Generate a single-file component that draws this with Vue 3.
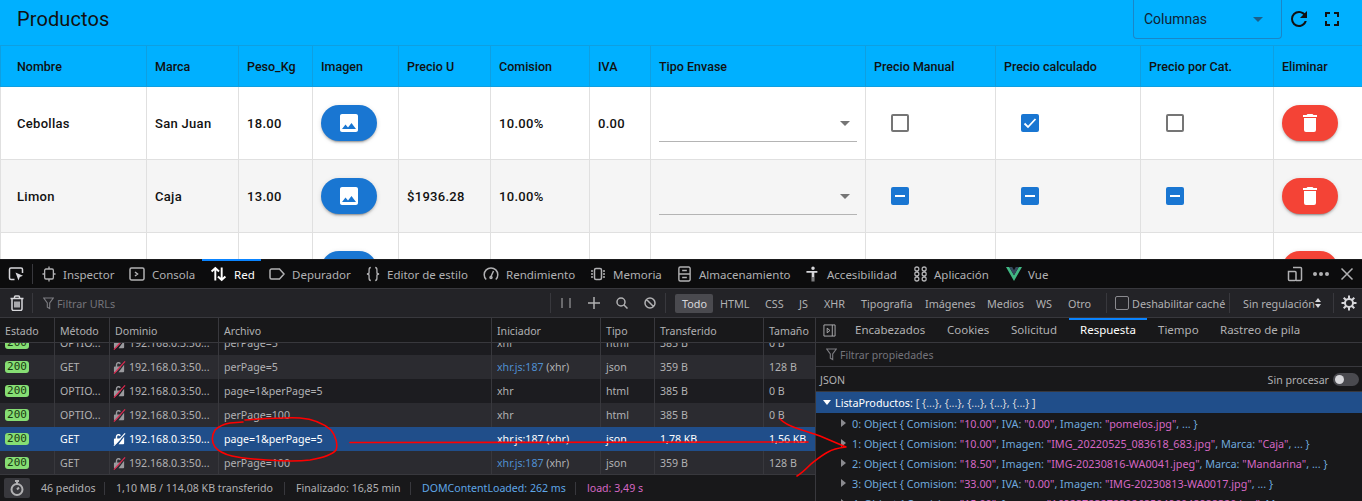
<script setup>
const img = 'M21 19V5c0-1.1-.9-2-2-2H5c-1.1 0-2 .9-2 2v14c0 1.1.9 2 2 2h14c1.1 0 2-.9 2-2zM8.5 13.5l2.5 3.01L14.5 12l4.5 6H5l3.5-4.5z'
const del = 'M19,4H15.5L14.5,3H9.5L8.5,4H5V6H19M6,19A2,2 0 0,0 8,21H16A2,2 0 0,0 18,19V7H6V19Z'
const heads = ['Nombre','Marca','Peso_Kg','Imagen','Precio U','Comision','IVA','Tipo Envase','Precio Manual','Precio calculado','Precio por Cat.','Eliminar']
const rows = [
  { n:'Cebollas', m:'San Juan', p:'18.00', u:'', c:'10.00%', i:'0.00', b:['off','on','off'] },
  { n:'Limon', m:'Caja', p:'13.00', u:'$1936.28', c:'10.00%', i:'', b:['mix','mix','mix'] },
  { n:'', m:'', p:'', u:'', c:'', i:'', b:['','',''] }
]
const tabs = [
  { t:'Inspector', w:87, iw:14, d:'M4.5 3h7a1.5 1.5 0 0 1 1.5 1.5v7a1.5 1.5 0 0 1-1.5 1.5h-7A1.5 1.5 0 0 1 3 11.5v-7A1.5 1.5 0 0 1 4.5 3zM8 .5V3M8 13v2.500M.5 8H3M13 8h2.500' },
  { t:'Consola', w:81, iw:16, d:'M2.500 2h11A1.500 1.500 0 0 1 15 3.500v9a1.500 1.500 0 0 1-1.500 1.500h-11A1.500 1.500 0 0 1 1 12.500v-9A1.500 1.500 0 0 1 2.500 2zM6 6l2.500 2L6 10' },
  { t:'Red', w:59, iw:17, on:true, d:'M5 14.500V2M1.500 5.500L5 2l3.500 3.500M11 1.500V14M7.500 10.500L11 14l3.500-3.500' },
  { t:'Depurador', w:97, iw:16, d:'M2.500 3h8l4.500 5-4.500 5h-8A1.500 1.500 0 0 1 1 11.500v-7A1.500 1.500 0 0 1 2.500 3z' },
  { t:'Editor de estilo', w:117, iw:14, d:'M5.500 1.500C3.500 1.500 3.500 2.500 3.500 4v2.500C3.500 7.500 2.500 8 1 8c1.500 0 2.500.5 2.500 1.500V12c0 1.500 0 2.500 2 2.500M10.500 1.500c2 0 2 1 2 2.500v2.500c0 1 1 1.500 2.500 1.500-1.500 0-2.500.5-2.500 1.500V12c0 1.500 0 2.500-2 2.500' },
  { t:'Rendimiento', w:107, iw:16, d:'M3.200 13.500a6.800 6.800 0 1 1 9.600 0M10.500 5L8 10.500M7 11.500a1 1 0 1 0 2 0 1 1 0 1 0-2 0' },
  { t:'Memoria', w:87, iw:16, d:'M6 2.500h4A1.500 1.500 0 0 1 11.500 4v8a1.500 1.500 0 0 1-1.500 1.500H6A1.500 1.500 0 0 1 4.500 12V4A1.500 1.500 0 0 1 6 2.500zM1 5h2M1 8h2M1 11h2M13 5h2M13 8h2M13 11h2' },
  { t:'Almacenamiento', w:129, iw:15, d:'M3.500 1h9A1.500 1.500 0 0 1 14 2.500v11a1.500 1.500 0 0 1-1.500 1.500h-9A1.500 1.500 0 0 1 2 13.500v-11A1.500 1.500 0 0 1 3.500 1zM2 8h12M5.500 4.500h5M5.500 11.500h5' },
  { t:'Accesibilidad', w:108, iw:14, fill:true, d:'M8 .5a2 1.800 0 1 1 0 3.600 2 1.800 0 0 1 0-3.600zM.5 5h12.500v1.800H9.500V15.500H8.500V11H7.500v4.500H6.500V6.800H.5z' },
  { t:'Aplicación', w:92, iw:13, d:'M1 3a2.500 2 0 1 0 5 0 2.500 2 0 1 0-5 0M10 3a2.500 2 0 1 0 5 0 2.500 2 0 1 0-5 0M1 8a2.500 2 0 1 0 5 0 2.500 2 0 1 0-5 0M10 8a2.500 2 0 1 0 5 0 2.500 2 0 1 0-5 0M1 13a2.500 2 0 1 0 5 0 2.500 2 0 1 0-5 0M10 13a2.500 2 0 1 0 5 0 2.500 2 0 1 0-5 0' },
]
const filters = [['Todo',38],['HTML',45],['CSS',34],['JS',25],['XHR',37],['Tipografía',64],['Imágenes',62],['Medios',49],['WS',32],['Otro',38]]
const cols = ['Estado','Método','Dominio','Archivo','Iniciador','Tipo','Transferido','Tamaño']
const net = [
  { m:'OPTIO...', f:'perPage=5', i:'xhr', t:'html', s:'385 B', z:'0 B' },
  { m:'GET', f:'perPage=5', i:'xhr.js:187', x:true, t:'json', s:'359 B', z:'128 B' },
  { m:'OPTIO...', f:'page=1&perPage=5', i:'xhr', t:'html', s:'385 B', z:'0 B' },
  { m:'OPTIO...', f:'perPage=100', i:'xhr', t:'html', s:'385 B', z:'0 B' },
  { m:'GET', f:'page=1&perPage=5', i:'xhr.js:187', x:true, t:'json', s:'1,78 KB', z:'1,56 KB', sel:true },
  { m:'GET', f:'perPage=100', i:'xhr.js:187', x:true, t:'json', s:'359 B', z:'128 B' },
]
const detail = [['Encabezados',92],['Cookies',64],['Solicitud',69],['Respuesta',78,true],['Tiempo',62],['Rastreo de pila',130]]
const tree = [
  ['0: ','Comision: ','"10.00"',', IVA: ','"0.00"',', Imagen: ','"pomelos.jpg"',', ... }'],
  ['1: ','Comision: ','"10.00"',', Imagen: ','"IMG_20220525_083618_683.jpg"',', Marca: ','"Caja"',', ... }'],
  ['2: ','Comision: ','"18.50"',', Imagen: ','"IMG-20230816-WA0041.jpeg"',', Marca: ','"Mandarina"',', ... }'],
  ['3: ','Comision: ','"33.00"',', IVA: ','"0.00"',', Imagen: ','"IMG-20230813-WA0017.jpg"',', ... }'],
  ['4: ','Comision: ','"15.00"',', Imagen: ','"169237232723026850496048988320.jpg"',', M','',''],
]
</script>

<template>
  <div class="page">
    <section class="app">
      <header class="bar">
        <h1>Productos</h1>
        <div class="columnas"><span>Columnas</span><i class="caret"></i></div>
        <svg class="tool first" viewBox="0 0 24 24"><path d="M17.65,6.35C16.2,4.9 14.21,4 12,4A8,8 0 0,0 4,12A8,8 0 0,0 12,20C15.73,20 18.84,17.45 19.73,14H17.65C16.83,16.33 14.61,18 12,18A6,6 0 0,1 6,12A6,6 0 0,1 12,6C13.66,6 15.14,6.69 16.22,7.78L13,11H20V4L17.65,6.35Z"/></svg>
        <svg class="tool" viewBox="0 0 24 24"><path d="M5,5H10V7H7V10H5V5M14,5H19V10H17V7H14V5M17,14H19V19H14V17H17V14M10,17V19H5V14H7V17H10Z"/></svg>
      </header>
      <div class="grid">
        <div v-for="h in heads" :key="h" class="th">{{ h }}</div>
        <template v-for="(r, ri) in rows" :key="ri">
          <div class="td" :class="{ alt: ri === 1 }">{{ r.n }}</div>
          <div class="td" :class="{ alt: ri === 1 }">{{ r.m }}</div>
          <div class="td" :class="{ alt: ri === 1 }">{{ r.p }}</div>
          <div class="td" :class="{ alt: ri === 1 }"><button class="fab blue"><svg viewBox="0 0 24 24"><path :d="img"/></svg></button></div>
          <div class="td" :class="{ alt: ri === 1 }">{{ r.u }}</div>
          <div class="td" :class="{ alt: ri === 1 }">{{ r.c }}</div>
          <div class="td" :class="{ alt: ri === 1 }">{{ r.i }}</div>
          <div class="td" :class="{ alt: ri === 1 }"><div v-if="ri < 2" class="tsel"><i class="caret gray"></i></div></div>
          <div v-for="(b, bi) in r.b" :key="bi" class="td chk" :class="{ alt: ri === 1 }">
            <span v-if="b" class="box" :class="b">
              <svg v-if="b === 'on'" viewBox="0 0 18 18"><path d="M3.500 9.500l3.500 3.500 7.500-8" fill="none" stroke="#fff" stroke-width="1.800"/></svg>
              <b v-if="b === 'mix'"></b>
            </span>
          </div>
          <div class="td" :class="{ alt: ri === 1 }"><button class="fab red"><svg viewBox="0 0 24 24"><path :d="del"/></svg></button></div>
        </template>
      </div>
    </section>

    <section class="dev">
      <div class="tabs">
        <svg class="ic pick" viewBox="0 0 16 16"><path class="st" d="M6.500 13.500H3A1.500 1.500 0 0 1 1.500 12V3.500A1.500 1.500 0 0 1 3 2h10a1.500 1.500 0 0 1 1.500 1.500V7"/><path class="fl" d="M7.500 6.500l7.500 3.200-3.200 1.300-1.300 3.500z"/></svg>
        <span class="vsep pk"></span>
        <div v-for="t in tabs" :key="t.t" class="tab" :class="{ on: t.on }" :style="{ width: t.w + 'px' }">
          <svg class="ic" viewBox="0 0 16 16" preserveAspectRatio="none" :style="{ width: t.iw + 'px' }"><path :class="t.fill ? 'fl' : 'st'" :d="t.d"/></svg>
          <span>{{ t.t }}</span>
        </div>
        <div class="tab vue">
          <svg class="ic" viewBox="0 0 16 14"><path fill="#41b883" d="M0 0h3.200L8 8.200 12.800 0H16L8 14z"/><path fill="#35495e" d="M3.200 0h3L8 3.200 9.800 0h3L8 8.200z"/></svg>
          <span>Vue</span>
        </div>
        <div class="end">
          <svg class="ic" viewBox="0 0 16 16"><path class="st" d="M6 1.500h7.500a1 1 0 0 1 1 1v11a1 1 0 0 1-1 1H9M1.500 5.500H8a1 1 0 0 1 1 1v7a1 1 0 0 1-1 1H2.500a1 1 0 0 1-1-1v-8z"/></svg>
          <span class="dots"><i></i><i></i><i></i></span>
          <svg class="ic" viewBox="0 0 16 16"><path class="st" d="M2.500 2.500l11 11M13.500 2.500l-11 11"/></svg>
        </div>
      </div>

      <div class="toolbar">
        <svg class="ic trash" viewBox="0 0 14 16"><path class="st br" d="M.5 3.500h13M4.500 3.500V2a1 1 0 0 1 1-1h3a1 1 0 0 1 1 1v1.500M2 3.500V14a1.500 1.500 0 0 0 1.500 1.500h7A1.500 1.500 0 0 0 12 14V3.500M5 6.500v6M7 6.500v6M9 6.500v6"/></svg>
        <span class="vsep s1"></span>
        <svg class="ic funnel" viewBox="0 0 12 14"><path class="dim" d="M.8 1h10.400L7.300 6.500v6L4.700 11V6.500z"/></svg>
        <span class="ph">Filtrar URLs</span>
        <span class="vsep s2"></span>
        <svg class="ic pause" viewBox="0 0 10 12"><path class="st thin" d="M1 1v10M9 1v10"/></svg>
        <svg class="ic plus" viewBox="0 0 12 12"><path class="st" d="M6 0v12M0 6h12"/></svg>
        <svg class="ic mag" viewBox="0 0 12 12"><path class="st" d="M1 5a4 4 0 1 0 8 0 4 4 0 1 0-8 0M8 8l3.500 3.500"/></svg>
        <svg class="ic blk" viewBox="0 0 12 12"><path class="st" d="M1 6a5 5 0 1 0 10 0A5 5 0 1 0 1 6M2.500 2.500l7 7"/></svg>
        <span class="vsep s3"></span>
        <span v-for="(f, i) in filters" :key="f[0]" class="flt" :class="{ act: i === 0 }" :style="{ width: f[1] + 'px' }"><em>{{ f[0] }}</em></span>
        <span class="vsep s4"></span>
        <span class="cache"><i></i>Deshabilitar caché</span>
        <span class="vsep s5"></span>
        <span class="thr">Sin regulación</span>
        <svg class="ic updn" viewBox="0 0 6 10"><path class="fl" d="M3 0l3 4H0zM3 10l3-4H0z"/></svg>
        <span class="vsep s6"></span>
        <svg class="ic gear" viewBox="0 0 16 16"><path class="st wide br" d="M4 8a4 4 0 1 0 8 0 4 4 0 1 0-8 0M8 .5v3M8 12.500v3M.5 8h3M12.500 8h3M2.700 2.700l2.100 2.100M11.200 11.200l2.100 2.100M13.300 2.700l-2.100 2.100M4.800 11.200l-2.100 2.100"/></svg>
      </div>

      <div class="split">
        <div class="left">
          <div class="nrow nhead">
            <div v-for="c in cols" :key="c" class="nc">{{ c }}</div>
          </div>
          <div class="nbody">
            <div v-for="(n, i) in net" :key="i" class="nrow" :class="{ light: i % 2 === 1, picked: n.sel }">
              <div class="nc"><span class="pill">200</span></div>
              <div class="nc">{{ n.m }}</div>
              <div class="nc dom">
                <svg viewBox="0 0 14 14"><path class="lk" d="M3 6V4a3 3 0 0 1 5.500-1.600L7.300 3.600A1.500 1.500 0 0 0 4.500 4v2H9l-6 6H2a1 1 0 0 1-1-1V7a1 1 0 0 1 1-1zM12 4v7a1 1 0 0 1-1 1H6z"/><path class="slash" d="M1 13.500L13 .5"/></svg>
                <span>192.168.0.3:50...</span>
              </div>
              <div class="nc">{{ n.f }}</div>
              <div class="nc"><span :class="{ link: n.x }">{{ n.i }}</span><template v-if="n.x"> (xhr)</template></div>
              <div class="nc">{{ n.t }}</div>
              <div class="nc">{{ n.s }}</div>
              <div class="nc">{{ n.z }}</div>
            </div>
          </div>
          <div class="status">
            <span class="watch"><svg viewBox="0 0 16 16"><path class="st wide" d="M2.500 9.500a5.500 5.500 0 1 0 11 0 5.500 5.500 0 1 0-11 0M8 1v3M6 1h4M8 9.500l2-2"/></svg></span>
            <span class="sg g1">46 pedidos</span>
            <span class="sg g2">1,10 MB / 114,08 KB transferido</span>
            <span class="sg g3">Finalizado: 16,85 min</span>
            <span class="sg g4 blue-t">DOMContentLoaded: 262 ms</span>
            <span class="sg g5 pink-t">load: 3,49 s</span>
          </div>
        </div>

        <div class="right">
          <div class="dtabs">
            <svg class="ic panel" viewBox="0 0 14 14"><path class="st thin" d="M1 1h12v12H1zM10 1v12M4.500 4.500l3 2.500-3 2.500z"/></svg>
            <span v-for="d in detail" :key="d[0]" class="dt" :class="{ on: d[2] }" :style="{ width: d[1] + 'px' }">{{ d[0] }}</span>
          </div>
          <div class="dfilter">
            <svg class="ic funnel2" viewBox="0 0 12 14"><path class="dim" d="M.8 1h10.400L7.300 6.500v6L4.700 11V6.500z"/></svg>
            <span class="ph">Filtrar propiedades</span>
          </div>
          <div class="djson">
            <span>JSON</span>
            <span class="raw">Sin procesar<i class="sw"><b></b></i></span>
          </div>
          <div class="tree">
            <div class="tr head"><i class="tri down"></i>ListaProductos:<span class="sum"> [ {...}, {...}, {...}, {...}, {...} ]</span></div>
            <div v-for="t in tree" :key="t[0]" class="tr">
              <i class="tri"></i><span class="k">{{ t[0] }}</span><span class="k">Object { </span><span class="k">{{ t[1] }}</span><span class="s">{{ t[2] }}</span><span class="k">{{ t[3] }}</span><span class="s">{{ t[4] }}</span><span class="k">{{ t[5] }}</span><span class="s">{{ t[6] }}</span><span class="k">{{ t[7] }}</span>
            </div>
          </div>
        </div>
      </div>

      <svg class="ink" viewBox="0 0 1362 501">
        <path d="M245 420C262 419 285 417 300 418C312 419 322 422 331 430C336 436 338 445 336 450C332 455 322 458 310 460C295 462 280 461 267 460C252 459 240 458 232 456C224 454 218 451 215 447C211 441 212 435 215 430C219 426 224 424 230 423L243 422"/>
        <path d="M350 442.500L808 442"/>
        <path d="M780 419C785 424 790 426 796 428C804 431 812 433 820 436L846 447C838 448 833 449 828 452C822 455 816 460 811 464C806 469 802 473 797 476"/>
      </svg>
    </section>
  </div>
</template>

<style scoped>
.page { width: 1362px; height: 501px; overflow: hidden; display: flex; flex-direction: column; font-family: Roboto, sans-serif; }
.app { height: 259px; flex: none; overflow: hidden; background: #fff; color: #111; }
.bar { height: 45px; background: #00b0ff; display: flex; align-items: flex-start; padding-left: 17px; box-sizing: border-box; }
.bar h1 { margin: 6px 0 0; font-size: 20px; font-weight: 400; line-height: 27px; color: #111; flex: 1; letter-spacing: .1px; }
.columnas { width: 149px; height: 39px; box-sizing: border-box; border: 1px solid #1a86c8; border-top: 0; border-radius: 0 0 4px 4px; display: flex; align-items: center; justify-content: space-between; padding: 0 18px 0 10px; font-size: 14px; color: #123; }
.caret { width: 0; height: 0; border: 5px solid transparent; border-top-color: #1c5f8a; border-bottom: 0; }
.caret.gray { border-top-color: #757575; }
.tool { width: 24px; height: 24px; margin-top: 7px; fill: #111; }
.tool.first { margin-left: 5px; margin-right: 9px; }
.tool:last-child { margin-right: 18px; }
.grid { display: grid; grid-template-columns: 146px 92px 74px 86px 92px 99px 61px 215px 130px 145px 133px 89px; grid-template-rows: 42px 73px 73px 73px; }
.th { background: #00b0ff; border-left: 1px solid #0f9fe0; border-top: 1px solid #0f9fe0; border-bottom: 1px solid #0f9fe0; box-sizing: border-box; display: flex; align-items: center; padding-left: 8px; font-size: 12.500px; font-weight: 500; white-space: nowrap; }
.th:first-child, .td:nth-child(12n+1) { padding-left: 16px; }
.td { border-left: 1px solid #e0e0e0; border-bottom: 1px solid #e0e0e0; box-sizing: border-box; display: flex; align-items: center; padding-left: 8px; font-size: 13px; font-weight: 500; letter-spacing: .3px; min-width: 0; }
.td.alt { background: #f5f5f5; }
.fab { width: 56px; height: 36px; border: 0; border-radius: 18px; padding: 0; display: flex; align-items: center; justify-content: center; box-shadow: 0 3px 1px -2px rgba(0,0,0,.2), 0 2px 2px rgba(0,0,0,.14), 0 1px 5px rgba(0,0,0,.12); }
.fab svg { width: 24px; height: 24px; fill: #fff; }
.fab.blue { background: #1976d2; }
.fab.red { background: #f44336; }
.tsel { width: 198px; height: 100%; position: relative; }
.tsel::after { content: ""; position: absolute; left: 0; right: 0; top: 54px; border-bottom: 1px solid #b4b4b4; }
.tsel .caret { position: absolute; right: 7px; top: 34px; }
.td.chk { padding-left: 25px; }
.box { width: 18px; height: 18px; box-sizing: border-box; border-radius: 2px; display: flex; align-items: center; justify-content: center; }
.box svg { width: 18px; height: 18px; }
.box.off { border: 2px solid #757575; }
.box.on, .box.mix { background: #1976d2; }
.box.mix b { width: 10px; height: 2.500px; background: #fff; }

.dev { flex: 1; position: relative; background: #0c0c0d; color: #b1b1b3; font-family: "Noto Sans", sans-serif; font-size: 10.600px; min-height: 0; }
.ic { flex: none; display: block; }
.st { fill: none; stroke: #b1b1b3; stroke-width: 1.500; }
.st.br { stroke: #d7d7db; }
.st.thin { stroke-width: 1; }
.st.wide { stroke-width: 2; }
.fl { fill: #d7d7db; stroke: none; }
.dim { fill: none; stroke: #7d7d82; stroke-width: 1.200; }
.tabs { height: 28px; border-top: 1px solid #1b1b1d; border-bottom: 1px solid #38383d; display: flex; align-items: center; position: relative; font-size: 11.500px; }
.tabs .ic { height: 16px; width: 16px; }
.pick { margin-left: 8px; }
.pick .st { stroke: #d7d7db; }
.vsep { flex: none; width: 1px; height: 20px; background: #38383d; }
.pk { margin: 0 1px 0 8px; }
.tab { height: 28px; box-sizing: border-box; flex: none; display: flex; align-items: center; gap: 7px; padding-left: 8px; white-space: nowrap; position: relative; }
.tab.on { color: #fff; }
.tab.on .st { stroke: #fff; stroke-width: 1.800; }
.tab.on::before { content: ""; position: absolute; left: 0; right: 0; top: -1px; height: 2px; background: #0a84ff; }
.tab.vue { padding-left: 8px; gap: 6px; }
.end { margin-left: auto; display: flex; align-items: center; gap: 10px; padding-right: 7px; }
.dots { display: flex; gap: 2px; width: 16px; }
.dots i { width: 4px; height: 4px; border-radius: 50%; background: #b1b1b3; }
.toolbar { height: 28px; background: #232327; border-bottom: 1px solid #38383d; display: flex; align-items: center; position: relative; font-size: 10.800px; }
.trash { width: 14px; height: 16px; margin: 0 8px 0 10px; }
.funnel { width: 11px; height: 13px; margin-left: 10px; }
.ph { color: #74747a; margin-left: 3px; white-space: nowrap; }
.s2 { margin-left: auto; }
.pause { width: 10px; height: 12px; margin-left: 10px; }
.plus { width: 12px; height: 12px; margin-left: 17px; }
.mag { width: 12px; height: 12px; margin-left: 16px; }
.blk { width: 12px; height: 12px; margin-left: 16px; }
.s3 { margin: 0 9px; }
.flt { flex: none; height: 19px; display: flex; align-items: center; padding-left: 7px; box-sizing: border-box; white-space: nowrap; border-radius: 2px; }
.flt em { font-style: normal; }
.flt.act { background: #4a4a4f; color: #d7d7db; }
.s4 { margin: 0 8px 0 7px; }
.cache { display: flex; align-items: center; gap: 3px; white-space: nowrap; width: 114px; flex: none; }
.cache i { width: 14px; height: 14px; box-sizing: border-box; border: 1.500px solid #8a8a8f; border-radius: 2px; flex: none; }
.s5 { margin-right: 13px; }
.thr { white-space: nowrap; width: 72px; flex: none; }
.updn { width: 6px; height: 10px; margin: 0 12px 0 0; }
.gear { width: 16px; height: 16px; margin: 0 5px 0 7px; }
.split { display: flex; height: 183px; }
.left { width: 816px; flex: none; display: flex; flex-direction: column; background: #18181a; border-right: 1px solid #38383d; box-sizing: border-box; }
.nrow { display: grid; grid-template-columns: 55px 55px 109px 273px 109px 54px 109px 51px; height: 24px; background: #1c1c20; flex: none; }
.nhead { height: 24px; background: #18181a; border-bottom: 1px solid #38383d; }
.nhead .nc { padding-top: 2px; }
.nbody { height: 132px; overflow: hidden; border-bottom: 1px solid #38383d; box-sizing: border-box; flex: none; }
.nbody .nrow:first-child { margin-top: -12px; }
.nrow.light { background: #2b2b30; }
.nrow.picked { background: #204e8a; color: #fff; }
.nc { border-right: 1px solid #38383d; display: flex; align-items: center; padding-left: 5px; white-space: pre; overflow: hidden; min-width: 0; }
.nc:last-child { border-right: 0; }
.picked .nc { border-color: transparent; }
.picked .link { color: #fff; }
.link { color: #4f8fd0; }
.pill { background: #86de74; color: #1a3a12; border-radius: 3px; height: 12px; line-height: 12px; width: 24px; text-align: center; font-family: "DejaVu Sans Mono", monospace; font-size: 11px; }
.nc.dom { padding-left: 3px; gap: 3px; }
.dom svg { width: 13px; height: 13px; flex: none; }
.lk { fill: #9a9a9e; }
.slash { stroke: #e22850; stroke-width: 1.300; fill: none; }
.picked .lk { fill: #fff; }
.picked .slash { stroke: #fff; }
.status { flex: 1; display: flex; align-items: center; position: relative; background: #18181a; }
.watch { width: 26px; height: 20px; margin-left: 4px; background: #38383d; border-radius: 2px; display: flex; align-items: center; justify-content: center; flex: none; }
.watch svg { width: 16px; height: 16px; }
.sg { white-space: nowrap; flex: none; padding-left: 11px; border-right: 1px solid #38383d; box-sizing: border-box; line-height: 13px; }
.g1 { width: 75px; }
.g2 { width: 180px; }
.g3 { width: 126px; }
.g4 { width: 165px; }
.g5 { border: 0; }
.blue-t { color: #5ea6e6; }
.pink-t { color: #d667c3; }
.right { flex: 1; min-width: 0; background: #18181a; overflow: hidden; }
.dtabs { height: 24px; display: flex; align-items: center; border-bottom: 1px solid #38383d; font-size: 11.500px; }
.panel { width: 13px; height: 13px; margin: 0 8px 0 7px; }
.dt { flex: none; height: 24px; box-sizing: border-box; padding: 0 0 2px 11px; display: flex; align-items: center; white-space: nowrap; position: relative; }
.dt.on { color: #fff; }
.dt.on::before { content: ""; position: absolute; left: 0; right: 0; top: 0; height: 2px; background: #0a84ff; }
.dfilter { height: 23px; display: flex; align-items: center; border-bottom: 1px solid #38383d; padding-left: 10px; font-size: 10.500px; }
.funnel2 { width: 11px; height: 13px; }
.djson { height: 24px; display: flex; align-items: center; justify-content: space-between; padding: 1px 3px 0 4px; box-sizing: border-box; height: 25px; border-bottom: 1px solid #38383d; }
.raw { display: flex; align-items: center; gap: 4px; }
.sw { width: 26px; height: 13px; border-radius: 7px; background: #4a4a4f; display: flex; align-items: center; padding-left: 2px; box-sizing: border-box; }
.sw b { width: 9px; height: 9px; border-radius: 50%; background: #d7d7db; }
.tree { font-size: 10.800px; }
.tr { height: 20px; display: flex; align-items: center; white-space: pre; padding-left: 25px; }
.tr.head { height: 21px; background: #204e8a; color: #fff; padding-left: 7px; }
.sum { color: #d7d7db; }
.tri { width: 0; height: 0; border-left: 5px solid #8a8a8f; border-top: 4.500px solid transparent; border-bottom: 4.500px solid transparent; margin-right: 6px; flex: none; }
.tri.down { border-left: 4.500px solid transparent; border-right: 4.500px solid transparent; border-top: 5px solid #fff; border-bottom: 0; margin-right: 4px; }
.k { color: #6fa8dc; }
.s { color: #d667c3; }
.ink { position: absolute; left: 0; top: -259px; width: 1362px; height: 501px; pointer-events: none; }
.ink path { fill: none; stroke: #f00; stroke-width: 1.600; stroke-linecap: round; stroke-linejoin: round; }
</style>

<style>
html, body { margin: 0; overflow: hidden; background: #fff; }
</style>
